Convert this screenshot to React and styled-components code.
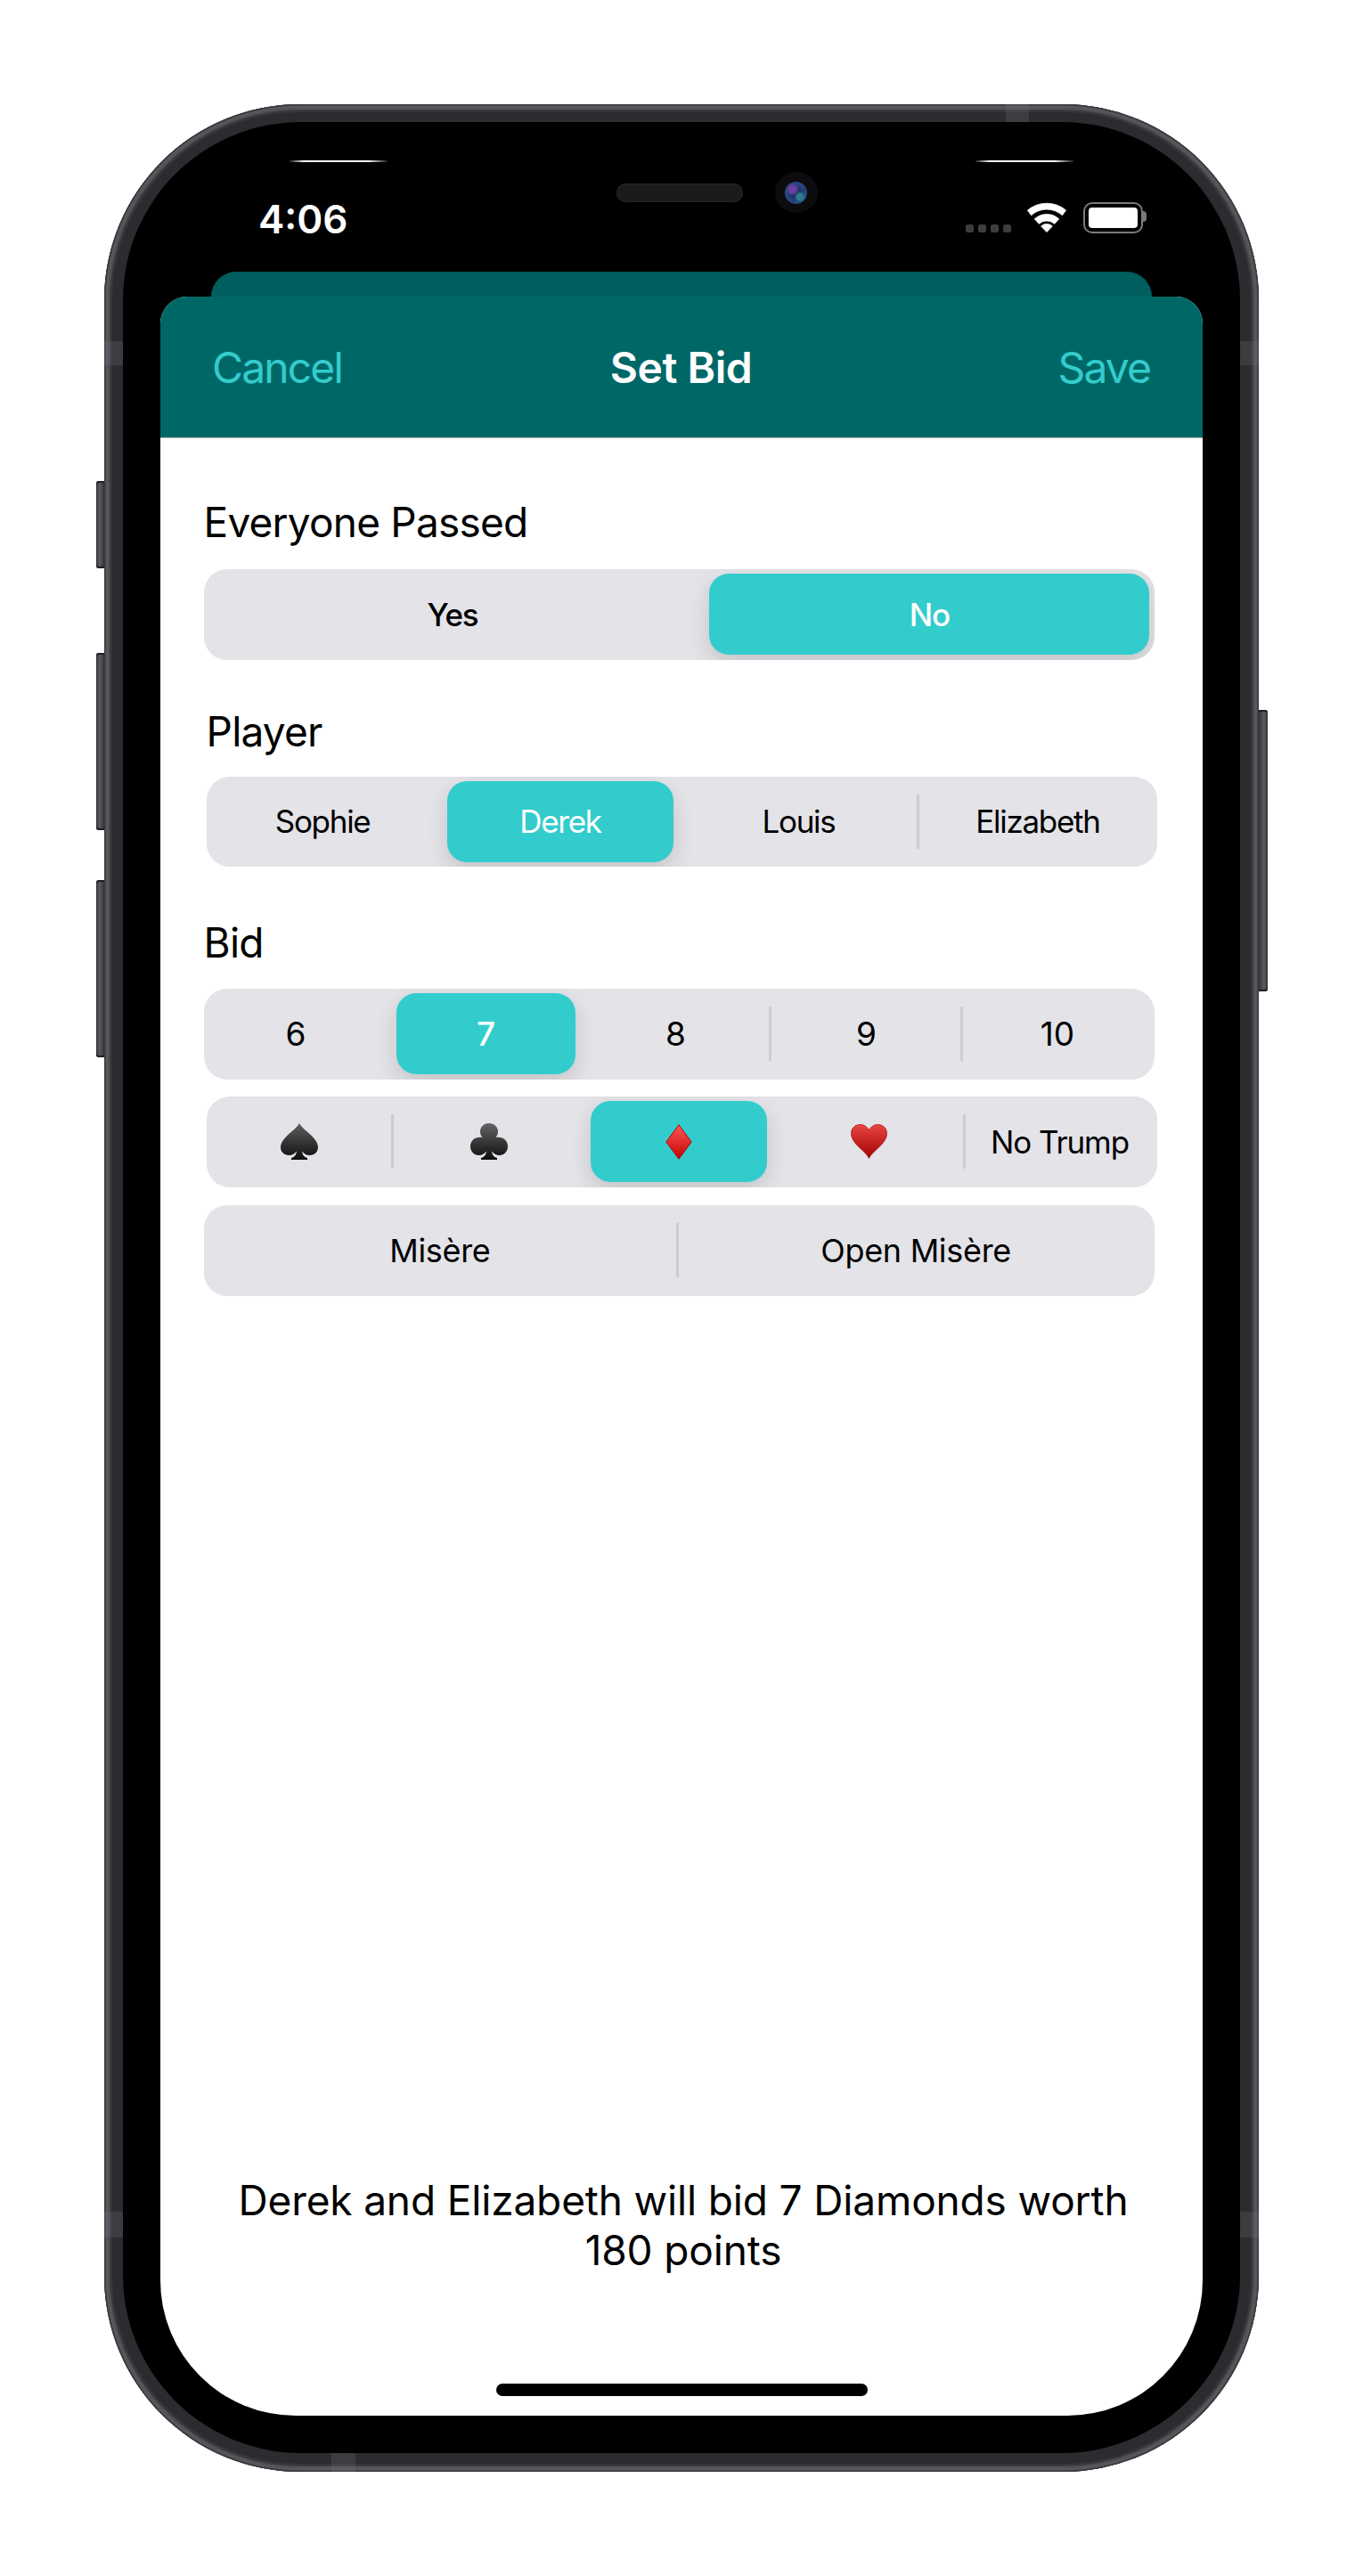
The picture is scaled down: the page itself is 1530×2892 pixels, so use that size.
import React from 'react';
import styled, { createGlobalStyle } from 'styled-components';

const GlobalStyle = createGlobalStyle`
    * { box-sizing: border-box; }
    html, body { margin: 0; background: #fff; }
    body { font-family: Inter, "Noto Sans", sans-serif; color: #000; }
`;

const Page = styled.div`
    width: 1530px;
    height: 2892px;
    padding: 117px 0 0 117px;
    overflow: hidden;
`;

const Phone = styled.div`
    position: relative;
    width: 1296px;
    height: 2658px;
    padding: 20px 21px 21px;
    border-radius: 220px;
    background: #2c2c30;
    box-shadow: inset 0 0 0 1.5px #3a3a3e, inset 0 0 2px 6px #56565b, inset 0 0 2px 9px #38383c;
`;

const SideButton = styled.div`
    position: absolute;
    top: ${p => p.$top}px;
    height: ${p => p.$height}px;
    width: 9.5px;
    ${p => (p.$right ? 'left: 100%;' : 'right: 100%;')}
    border-radius: ${p => (p.$right ? '0 3px 3px 0' : '3px 0 0 3px')};
    background: linear-gradient(${p => (p.$right ? '90deg' : '270deg')}, #38383c 0%, #5a5a60 60%, #333337 100%);
    box-shadow: inset 0 2px 1px #1e1e20, inset 0 -2px 1px #1e1e20;
`;

const AntennaBand = styled.div`
    position: absolute;
    background: rgba(120, 120, 126, 0.22);
    ${p => p.$css}
`;

const Bezel = styled.div`
    height: 100%;
    padding: 43px 42px 42px;
    border-radius: 200px;
    background: #000;
`;

const Screen = styled.div`
    position: relative;
    display: flex;
    flex-direction: column;
    width: 1170px;
    height: 2532px;
    overflow: hidden;
    border-radius: 140px 140px 152px 152px;
    background: #000;
`;

const EdgeGlint = styled.div`
    position: absolute;
    top: 0;
    left: ${p => p.$left}px;
    width: 110px;
    height: 2px;
    background: linear-gradient(90deg, rgba(255,255,255,0.1), #fff 15%, #fff 80%, rgba(255,255,255,0.1));
`;

const StatusBar = styled.div`
    display: flex;
    align-items: flex-start;
    height: 125px;
`;

const Clock = styled.div`
    margin: 40px 0 0 110px;
    width: 102px;
    font-size: 44px;
    line-height: 52px;
    font-weight: 600;
    color: #fff;
`;

const Sensors = styled.div`
    display: flex;
    align-items: center;
    gap: 36px;
    height: 46px;
    margin: 13px 0 0 299.5px;
`;

const Speaker = styled.div`
    width: 142px;
    height: 21px;
    border-radius: 11px;
    background: #1b1b1c;
    box-shadow: inset 0 0 0 1px #262627;
`;

const Camera = styled.div`
    display: flex;
    align-items: center;
    justify-content: center;
    width: 48px;
    height: 46px;
    border-radius: 50%;
    background: #0c0c0e;
`;

const Lens = styled.div`
    width: 25px;
    height: 25px;
    border-radius: 50%;
    background:
        radial-gradient(circle at 35% 35%, #6a3fa0 0 16%, transparent 32%),
        radial-gradient(circle at 68% 68%, #2f7f8f 0 12%, transparent 28%),
        radial-gradient(circle, #16224a 0%, #2a4a88 70%, #101830 100%);
`;

const Indicators = styled.div`
    display: flex;
    align-items: flex-start;
    margin: 47px 0 0 166px;
`;

const SignalDots = styled.div`
    display: flex;
    gap: 5px;
    margin: 25px 18px 0 0;
`;

const SignalDot = styled.div`
    width: 9px;
    height: 9px;
    border-radius: 2.5px;
    background: #3d3d3f;
`;

const Battery = styled.div`
    position: relative;
    width: 67px;
    height: 35px;
    margin-left: 19px;
    padding: 4px;
    border: 2.5px solid #7b7b7d;
    border-radius: 10px;

    &::after {
        content: '';
        position: absolute;
        left: 100%;
        top: 8px;
        width: 4px;
        height: 12px;
        margin-left: 2px;
        border-radius: 0 4px 4px 0;
        background: #7b7b7d;
    }
`;

const BatteryFill = styled.div`
    height: 100%;
    border-radius: 4px;
    background: #fff;
`;

const BackSheet = styled.div`
    flex: 0 0 28px;
    margin: 0 57px;
    border-radius: 28px 28px 0 0;
    background: #005e5e;
`;

const Sheet = styled.div`
    flex: 1;
    display: flex;
    flex-direction: column;
    border-radius: 30px 30px 0 0;
    background: #fff;
    overflow: hidden;
`;

const Header = styled.div`
    display: grid;
    grid-template-columns: 1fr auto 1fr;
    align-items: center;
    flex: 0 0 159px;
    padding: 0 59px 0 58px;
    background: #006767;
    border-bottom: 1.5px solid #b4b4b4;
`;

const HeaderAction = styled.div`
    font-size: 48px;
    letter-spacing: -1.9px;
    color: #33cccc;
    text-align: ${p => (p.$end ? 'right' : 'left')};
`;

const Title = styled.div`
    font-size: 48px;
    letter-spacing: -0.5px;
    font-weight: 600;
    color: #fff;
`;

const Form = styled.div`
    padding: 66px 0 0 48.6px;
`;

const Label = styled.div`
    height: 56px;
    margin: ${p => p.$top}px 0 ${p => p.$bottom}px ${p => p.$indent}px;
    font-size: 46px;
    line-height: 56px;
    letter-spacing: -0.8px;
`;

const Control = styled.div`
    display: flex;
    width: ${p => p.$width}px;
    height: 101.5px;
    margin: ${p => p.$top}px 0 0 ${p => p.$indent}px;
    padding: 5px 0 5.5px;
    border-radius: 26px;
    font-size: ${p => p.$size}px;
    letter-spacing: ${p => p.$track}px;
    background: #e3e3e8;
    overflow: hidden;
`;

const Segment = styled.div`
    display: flex;
    align-items: center;
    justify-content: center;
    flex: 0 0 ${p => p.$w}px;
    margin-left: ${p => p.$gap || 0}px;
    border-radius: 22px;
    font-weight: ${p => (p.$strong ? 500 : 400)};
    color: ${p => (p.$active ? '#fff' : '#000')};
    background: ${p => (p.$active ? '#33cccc' : 'transparent')};
    box-shadow: ${p => (p.$active ? '0 9px 24px rgba(0, 0, 0, 0.14)' : 'none')};
`;

const Rule = styled.div`
    flex: 0 0 3px;
    height: 61px;
    align-self: center;
    background: #cdcdd1;
`;

const Footer = styled.div`
    margin-top: auto;
    padding: 0 62px 0 66px;
    font-size: 46px;
    line-height: 56px;
    letter-spacing: -0.15px;
    text-align: center;
`;

const HomeBar = styled.div`
    align-self: center;
    flex: 0 0 14px;
    width: 417px;
    margin: 122px 0 22px;
    border-radius: 7px;
    background: #000;
`;

const WifiIcon = () => (
    <svg width="44" height="34" viewBox="0 0 44 34" fill="#fff" stroke="#fff" strokeWidth="0.8" strokeLinejoin="round">
        <path d="M0.4 9.1A33.5 33.5 0 0 1 43.6 9.1L39.4 14.7A26 26 0 0 0 4.6 14.7Z" />
        <path d="M8.3 18.8A20.5 20.5 0 0 1 35.7 18.8L30.7 24.3A13 13 0 0 0 13.3 24.3Z" />
        <path d="M15.6 26.9A9.5 9.5 0 0 1 28.4 26.9L22 33.6Z" />
    </svg>
);

const SuitGradient = ({ id, from, to, height }) => (
    <defs>
        <linearGradient id={id} gradientUnits="userSpaceOnUse" x1="0" y1="0" x2="0" y2={height}>
            <stop offset="0" stopColor={from} />
            <stop offset="1" stopColor={to} />
        </linearGradient>
    </defs>
);

const Spade = () => (
    <svg width="42" height="41" viewBox="0 0 42 41">
        <SuitGradient id="spade" from="#5f5f5f" to="#0e0e0e" height="41" />
        <path
            fill="url(#spade)"
            d="M21 0C17 8 0 16 0 27C0 33 5 36 9.5 36C13 36 16 34 18 31.5C17.5 35 16 38 12 39L12 41L30 41L30 39C26 38 24.5 35 24 31.5C26 34 29 36 32.5 36C37 36 42 33 42 27C42 16 25 8 21 0Z"
        />
    </svg>
);

const Club = () => (
    <svg width="42" height="41" viewBox="0 0 42 41">
        <SuitGradient id="club" from="#646464" to="#0e0e0e" height="41" />
        <path
            fill="url(#club)"
            d="M21 0C26.5 0 31 4 31 9.5C31 12 30 14 28.5 16C35.5 14.5 42 18.5 42 26C42 32 37.5 36 32.5 36C29 36 26 34 24 31.5C24.5 35 26 38 30 39L30 41L12 41L12 39C16 38 17.5 35 18 31.5C16 34 13 36 9.5 36C4.5 36 0 32 0 26C0 18.5 6.5 14.5 13.5 16C12 14 11 12 11 9.5C11 4 15.5 0 21 0Z"
        />
    </svg>
);

const Diamond = () => (
    <svg width="30" height="40" viewBox="0 0 30 40">
        <SuitGradient id="diamond" from="#ff5a5a" to="#c20000" height="40" />
        <path fill="url(#diamond)" stroke="#b80000" strokeWidth="1" d="M15 0.8L29.2 20L15 39.2L0.8 20Z" />
    </svg>
);

const Heart = () => (
    <svg width="41" height="39" viewBox="0 0 41 39">
        <SuitGradient id="heart" from="#ea4646" to="#a00000" height="39" />
        <path
            fill="url(#heart)"
            stroke="#b01010"
            strokeWidth="0.8"
            d="M20.5 38.4C17 30 0.5 22.5 0.5 10.5C0.5 4.5 5 0.5 10.5 0.5C15 0.5 18.5 3 20.5 7C22.5 3 26 0.5 30.5 0.5C36 0.5 40.5 4.5 40.5 10.5C40.5 22.5 24 30 20.5 38.4Z"
        />
    </svg>
);

const sideButtons = [
    { top: 423, height: 98 },
    { top: 616, height: 199 },
    { top: 871, height: 199 },
    { top: 680, height: 316, right: true },
];

const bands = [
    'top: 0; left: 1012px; width: 26px; height: 20px;',
    'bottom: 0; left: 255px; width: 27px; height: 21px;',
    'top: 266px; left: 0; width: 21px; height: 27px;',
    'top: 266px; right: 0; width: 21px; height: 27px;',
    'top: 2366px; left: 0; width: 21px; height: 29px;',
    'top: 2366px; right: 0; width: 21px; height: 29px;',
];

class App extends React.Component {
    render() {
        return (
            <Page>
                <GlobalStyle />
                <Phone>
                    {sideButtons.map(b => (
                        <SideButton key={b.top} $top={b.top} $height={b.height} $right={b.right} />
                    ))}
                    {bands.map(css => <AntennaBand key={css} $css={css} />)}
                    <Bezel>
                        <Screen>
                            <EdgeGlint $left={145} />
                            <EdgeGlint $left={915} />
                            <StatusBar>
                                <Clock>4:06</Clock>
                                <Sensors>
                                    <Speaker />
                                    <Camera><Lens /></Camera>
                                </Sensors>
                                <Indicators>
                                    <SignalDots>
                                        <SignalDot /><SignalDot /><SignalDot /><SignalDot />
                                    </SignalDots>
                                    <WifiIcon />
                                    <Battery><BatteryFill /></Battery>
                                </Indicators>
                            </StatusBar>
                            <BackSheet />
                            <Sheet>
                                <Header>
                                    <HeaderAction>Cancel</HeaderAction>
                                    <Title>Set Bid</Title>
                                    <HeaderAction $end>Save</HeaderAction>
                                </Header>
                                <Form>
                                    <Label $top={0} $bottom={25} $indent={0}>Everyone Passed</Label>
                                    <Control $width={1067} $top={0} $indent={0} $size={35} $track={-1.3}>
                                        <Segment $w={558.8} $strong>Yes</Segment>
                                        <Segment $w={494.5} $gap={8.6} $active $strong>No</Segment>
                                    </Control>
                                    <Label $top={52} $bottom={23} $indent={3}>Player</Label>
                                    <Control $width={1067} $top={0} $indent={3} $size={35} $track={-1.3}>
                                        <Segment $w={261}>Sophie</Segment>
                                        <Segment $w={254} $gap={9.4} $active>Derek</Segment>
                                        <Segment $w={265} $gap={8}>Louis</Segment>
                                        <Rule />
                                        <Segment $w={266}>Elizabeth</Segment>
                                    </Control>
                                    <Label $top={57} $bottom={24} $indent={0}>Bid</Label>
                                    <Control $width={1067} $top={0} $indent={0} $size={37} $track={0}>
                                        <Segment $w={206.8}>6</Segment>
                                        <Segment $w={201} $gap={9.6} $active $strong>7</Segment>
                                        <Segment $w={210} $gap={7.5}>8</Segment>
                                        <Rule />
                                        <Segment $w={212}>9</Segment>
                                        <Rule />
                                        <Segment $w={211}>10</Segment>
                                    </Control>
                                    <Control $width={1067} $top={19.5} $indent={3} $size={35} $track={-1.1}>
                                        <Segment $w={207.9}><Spade /></Segment>
                                        <Rule />
                                        <Segment $w={214}><Club /></Segment>
                                        <Segment $w={198} $gap={6.5} $active><Diamond /></Segment>
                                        <Segment $w={212.5} $gap={8}><Heart /></Segment>
                                        <Rule />
                                        <Segment $w={210}>No Trump</Segment>
                                    </Control>
                                    <Control $width={1067} $top={20.5} $indent={0} $size={36} $track={-0.3}>
                                        <Segment $w={530.5}>Misère</Segment>
                                        <Rule />
                                        <Segment $w={532}>Open Misère</Segment>
                                    </Control>
                                </Form>
                                <Footer>Derek and Elizabeth will bid 7 Diamonds worth 180 points</Footer>
                                <HomeBar />
                            </Sheet>
                        </Screen>
                    </Bezel>
                </Phone>
            </Page>
        );
    }
}

export default App;
